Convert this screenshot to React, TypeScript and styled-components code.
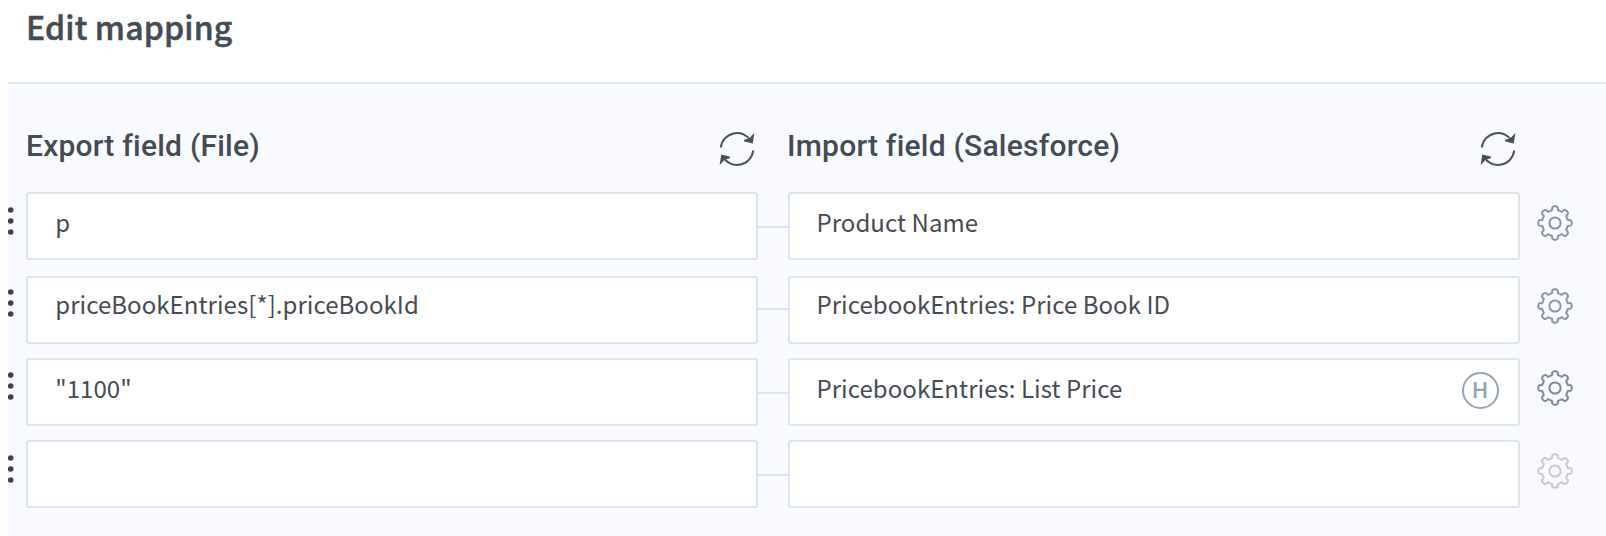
import React from 'react';
import styled, { createGlobalStyle } from 'styled-components';

const GlobalStyle = createGlobalStyle`
  *, *::before, *::after { box-sizing: border-box; }
  html, body { margin: 0; padding: 0; background: #fff; }
  body { height: 536px; overflow: hidden; font-family: "Noto Sans CJK SC", sans-serif; }
`;

const Page = styled.div`
  width: 1606px;
  height: 536px;
  padding-left: 8px;
  display: flex;
  flex-direction: column;
  color: #444b54;
`;

const Header = styled.header`
  height: 84px;
  padding: 2px 0 0 18px;
  border-bottom: 2px solid #dbe5eb;
`;

const Title = styled.h1`
  margin: 0;
  font-size: 32px;
  line-height: 48px;
  font-weight: 500;
  letter-spacing: 0.15px;
  -webkit-text-stroke: 0.5px currentColor;
  white-space: nowrap;
`;

const Panel = styled.main`
  flex: 1;
  background: #f8faff;
  padding-top: 40px;
`;

const ColumnHeads = styled.div`
  display: flex;
  gap: 29px;
  padding-left: 18px;
  height: 68px;
`;

const ColumnHead = styled.div`
  width: 732px;
  display: flex;
  justify-content: space-between;
  padding: 4px 2px 0 0;
`;

const ColumnTitle = styled.h2`
  margin: 0;
  font: 500 30px/36px Roboto, sans-serif;
  letter-spacing: 0.22px;
  white-space: nowrap;
`;

const Icon = styled.svg`
  display: block;
  flex: none;
  fill: none;
`;

const RefreshGlyph = styled(Icon)`
  margin-top: 2px;
`;

const Row = styled.div<{ $gap: number }>`
  display: flex;
  height: 68px;
  margin-bottom: ${(p) => p.$gap}px;
`;

const Handle = styled.div<{ $top: number }>`
  width: 18px;
  padding-top: ${(p) => p.$top}px;
`;

const Field = styled.div<{ $inset: number }>`
  width: 732px;
  height: 68px;
  display: flex;
  justify-content: space-between;
  background: #fff;
  border: 2px solid #dbe5eb;
  border-radius: 3px;
  padding: 0 19.5px 0 ${(p) => p.$inset}px;
`;

const FieldText = styled.span<{ $shift: number }>`
  font-size: 24px;
  line-height: 36px;
  letter-spacing: 0.05px;
  margin-top: ${(p) => p.$shift}px;
  white-space: nowrap;
`;

const Connector = styled.div<{ $top: number }>`
  width: 30px;
  height: 2px;
  margin-top: ${(p) => p.$top}px;
  background: #dbe5eb;
`;

const Badge = styled.span`
  width: 37px;
  height: 37px;
  margin-top: 11.5px;
  border: 2px solid #93a5b5;
  border-radius: 50%;
  color: #93a5b5;
  font: 500 22px/34px Roboto, sans-serif;
  text-align: center;
`;

const SettingsSlot = styled.div<{ $top: number }>`
  padding: ${(p) => p.$top}px 0 0 16px;
`;

const RefreshIcon = () => (
  <RefreshGlyph width="38" height="38" viewBox="-19 -19 38 38" stroke="#4a5058" strokeWidth="2">
    <path d="M-16.2 -1.5A16.3 16.3 0 0 1 14 -8M16.2 1.5A16.3 16.3 0 0 1 -14 8" />
    <path
      d="M16 -13.2L15 -6.6L7.4 -8.3L12.8 -9.8ZM-16 13.2L-15 6.6L-7.4 8.3L-12.8 9.8Z"
      transform="translate(0 0)"
      fill="#4a5058"
      strokeWidth="1.8"
    />
  </RefreshGlyph>
);

const teeth = Array.from({ length: 8 }, (_, i) => i * 45);

const polar = (r: number, deg: number) => {
  const a = (deg * Math.PI) / 180;
  return `${(r * Math.cos(a)).toFixed(2)} ${(r * Math.sin(a)).toFixed(2)}`;
};

const gearPath =
  teeth
    .map((t, i) => {
      const start = `${i === 0 ? 'M' : 'L'}${polar(13, t - 17)}`;
      return `${start}Q${polar(12.8, t - 12)} ${polar(14.4, t - 11.5)}Q${polar(16.4, t - 11)} ${polar(16.7, t - 4)}Q${polar(16.9, t)} ${polar(16.7, t + 4)}Q${polar(16.4, t + 11)} ${polar(14.4, t + 11.5)}Q${polar(12.8, t + 12)} ${polar(13, t + 17)}Q${polar(13.2, t + 22.5)} ${polar(13, t + 28)}`;
    })
    .join('') + 'Z';

const GearIcon = ({ color }: { color: string }) => (
  <Icon width="38" height="38" viewBox="-19 -19 38 38" stroke={color} strokeWidth="2" strokeLinejoin="round">
    <path d={gearPath} />
    <circle r="5.6" />
  </Icon>
);

const DotsIcon = () => (
  <Icon width="8" height="30" viewBox="0 0 8 30">
    {[4, 15, 26].map((y) => (
      <circle key={y} cx="2.7" cy={y} r="2.8" fill="#3c424a" />
    ))}
  </Icon>
);

const rows = [
  { from: 'p', to: 'Product Name', gap: 16, line: 34, dots: 14, gear: 12, text: 10, badge: '', color: '#8796a3' },
  { from: 'priceBookEntries[*].priceBookId', to: 'PricebookEntries: Price Book ID', gap: 14, line: 32, dots: 12, gear: 11, text: 8, badge: '', color: '#8796a3' },
  { from: '"1100"', to: 'PricebookEntries: List Price', gap: 14, line: 34, dots: 13, gear: 11, text: 10, badge: 'H', color: '#7d8b98' },
  { from: '', to: '', gap: 0, line: 34, dots: 14, gear: 12, text: 10, badge: '', color: '#c8cacd' },
];

const heads = ['Export field (File)', 'Import field (Salesforce)'];

export default function App() {
  return (
    <Page>
      <GlobalStyle />
      <Header>
        <Title>Edit mapping</Title>
      </Header>
      <Panel>
        <ColumnHeads>
          {heads.map((h) => (
            <ColumnHead key={h}>
              <ColumnTitle>{h}</ColumnTitle>
              <RefreshIcon />
            </ColumnHead>
          ))}
        </ColumnHeads>
        {rows.map((r, i) => (
          <Row key={i} $gap={r.gap}>
            <Handle $top={r.dots}>
              <DotsIcon />
            </Handle>
            <Field $inset={27.3}>
              <FieldText $shift={r.text}>{r.from}</FieldText>
            </Field>
            <Connector $top={r.line} />
            <Field $inset={26.5}>
              <FieldText $shift={r.text}>{r.to}</FieldText>
              {r.badge && <Badge>{r.badge}</Badge>}
            </Field>
            <SettingsSlot $top={r.gear}>
              <GearIcon color={r.color} />
            </SettingsSlot>
          </Row>
        ))}
      </Panel>
    </Page>
  );
}
